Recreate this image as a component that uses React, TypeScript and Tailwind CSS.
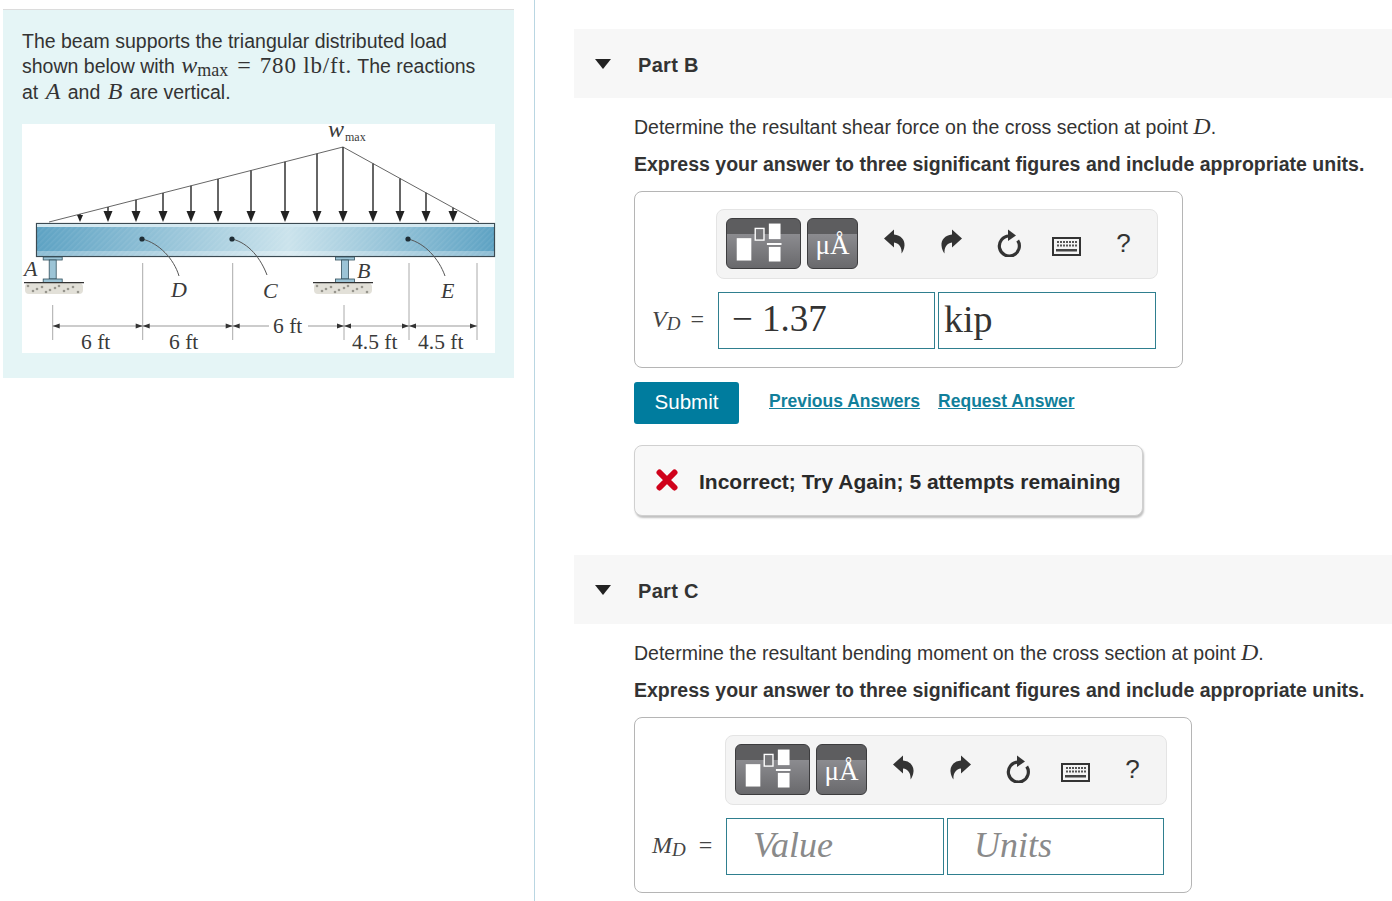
const serif = "font-['Liberation_Serif',serif]";

// x position of each load arrow, in diagram coordinates
const loadArrows = [58, 86, 114, 141, 169, 196, 229, 263, 295, 321, 351, 378, 404, 431];

function loadTop(x: number) {
  if (x <= 321) return 98 - ((x - 27) * 75) / 294;
  return 23 + ((x - 321) * 75) / 136;
}

function Gravel({ x }: { x: number }) {
  const dots = [4, 9, 13, 18, 22, 26, 31, 35, 40, 44, 49, 54];
  return (
    <g>
      <rect x={x + 1} y={159} width={58} height={11} rx={4} fill="#e2e0d8" />
      {dots.map((d, i) => (
        <circle key={d} cx={x + d} cy={162 + ((i * 5) % 7)} r={1.3} fill="#97958d" />
      ))}
      <line x1={x} x2={x + 60} y1={158.7} y2={158.7} stroke="#333" strokeWidth={1.2} />
    </g>
  );
}

function IBeam({ x }: { x: number }) {
  return (
    <g fill="#9cc4d6" stroke="#33505c" strokeWidth={0.8}>
      <rect x={x - 9.5} y={133} width={19} height={3} />
      <rect x={x - 3.5} y={136} width={7} height={19} />
      <rect x={x - 9.5} y={155} width={19} height={3.5} />
    </g>
  );
}

function DimArrow({ x, dir }: { x: number; dir: 1 | -1 }) {
  return <path d={`M${x} 202 l${dir * -7} -2.5 v5 Z`} fill="#333" />;
}

function BeamDiagram() {
  const labelClass = "font-['Liberation_Serif',serif] fill-[#3a3a3a]";
  return (
    <svg width={473} height={229} viewBox="0 0 473 229" className="block overflow-visible">
      <defs>
        <linearGradient id="beam" x1="0" x2="1" y1="0" y2="0">
          <stop offset="0" stopColor="#5da2c3" />
          <stop offset="0.55" stopColor="#cbe3ec" />
          <stop offset="1" stopColor="#5da2c3" />
        </linearGradient>
        <pattern id="hatch" width="4" height="4" patternUnits="userSpaceOnUse" patternTransform="rotate(45)">
          <rect width="1.5" height="4" fill="#ffffff" opacity="0.07" />
        </pattern>
      </defs>

      <rect width={473} height={229} fill="#fff" />

      <polyline points="27,98 321,23 457,98" fill="none" stroke="#666" strokeWidth={1} />
      {loadArrows.map((x) => {
        const top = loadTop(x);
        const headTop = Math.max(87, top + 1);
        const half = x === 58 ? 3 : 4.5;
        return (
          <g key={x}>
            <line x1={x} x2={x} y1={top} y2={92} stroke="#333" strokeWidth={1.5} />
            <path d={`M${x - half} ${headTop} H${x + half} L${x} 98 Z`} fill="#222" />
          </g>
        );
      })}

      <rect x={14.5} y={99.5} width={458} height={33} fill="url(#beam)" stroke="#3b4a52" strokeWidth={1.2} />
      <rect x={15} y={100} width={457} height={32} fill="url(#hatch)" />
      <rect x={15} y={100} width={457} height={3} fill="#d3e8f0" />
      <rect x={15} y={127} width={457} height={5} fill="#ffffff" opacity={0.3} />

      <IBeam x={30.7} />
      <IBeam x={323} />
      <Gravel x={2} />
      <Gravel x={291} />

      <g stroke="#aaa" strokeWidth={1}>
        <line x1={120.7} x2={120.7} y1={139} y2={216} />
        <line x1={210.7} x2={210.7} y1={139} y2={216} />
        <line x1={387} x2={387} y1={139} y2={216} />
        <line x1={455} x2={455} y1={139} y2={216} />
        <line x1={30.7} x2={30.7} y1={181} y2={216} />
        <line x1={322} x2={322} y1={181} y2={216} />
      </g>

      <g fill="none" stroke="#555" strokeWidth={1}>
        <path d="M120 115 C137 119 152 135 157 152" />
        <path d="M210 115 C227 119 239 135 245 151" />
        <path d="M386 115 C403 119 417 135 423 152" />
      </g>
      <circle cx={120} cy={115} r={2.6} fill="#1f2d35" />
      <circle cx={210} cy={115} r={2.6} fill="#1f2d35" />
      <circle cx={386} cy={115} r={2.6} fill="#1f2d35" />

      <g stroke="#999" strokeWidth={1}>
        <line x1={30.7} x2={210.7} y1={202} y2={202} />
        <line x1={210.7} x2={247} y1={202} y2={202} />
        <line x1={286} x2={455} y1={202} y2={202} />
      </g>
      <DimArrow x={30.7} dir={-1} />
      <DimArrow x={120.7} dir={1} />
      <DimArrow x={120.7} dir={-1} />
      <DimArrow x={210.7} dir={1} />
      <DimArrow x={210.7} dir={-1} />
      <DimArrow x={322} dir={1} />
      <DimArrow x={322} dir={-1} />
      <DimArrow x={387} dir={1} />
      <DimArrow x={387} dir={-1} />
      <DimArrow x={455} dir={1} />

      <g className={labelClass} fontStyle="italic" fontSize={22}>
        <text x={2} y={152}>A</text>
        <text x={335} y={154}>B</text>
        <text x={149} y={173}>D</text>
        <text x={241} y={174}>C</text>
        <text x={419} y={174}>E</text>
      </g>
      <text x={306} y={13} fontSize={24} fontStyle="italic" className={labelClass}>w</text>
      <text x={323} y={17} fontSize={12} className={labelClass}>max</text>
      <g className={labelClass} fontSize={21.5}>
        <text x={59} y={225}>6 ft</text>
        <text x={147} y={225}>6 ft</text>
        <text x={251} y={209}>6 ft</text>
        <text x={330} y={225}>4.5 ft</text>
        <text x={396} y={225}>4.5 ft</text>
      </g>
    </svg>
  );
}

function TemplateButton() {
  return (
    <button className="flex h-[51px] w-[75px] items-center justify-center rounded-md border border-[#3c3c3e] bg-[linear-gradient(#5d5d5f_0_30%,#8c8c90_30%,#69696c_100%)]">
      <svg width={75} height={51} viewBox="0 0 75 51">
        <rect x={10} y={20} width={15} height={23} fill="#fff" />
        <rect x={29} y={10} width={9} height={12} fill="#77777a" stroke="#fff" strokeWidth={1.4} />
        <rect x={43} y={5} width={12} height={16} fill="#fff" />
        <rect x={41} y={25} width={15} height={2} fill="#fff" />
        <rect x={43} y={29} width={12} height={15} fill="#fff" />
      </svg>
    </button>
  );
}

function SymbolButton() {
  return (
    <button className="relative flex h-[51px] w-[51px] items-end justify-center rounded-md border border-[#3c3c3e] bg-[linear-gradient(#5d5d5f_0_30%,#8c8c90_30%,#69696c_100%)] pb-[6px] font-['Liberation_Serif',serif] text-[27px] leading-[34px] text-white">
      μÅ
    </button>
  );
}

function UndoIcon({ flip }: { flip?: boolean }) {
  return (
    <svg width={21} height={25} viewBox="0 0 21 25" className={flip ? "-scale-x-100" : ""}>
      <path
        d="M0 9.5 L10 0.5 V5.5 C17 6 21 11 20.5 16.5 C20.2 20 19 22.5 17.5 24.5 C18 19 15.5 14 10 13.5 V18.5 Z"
        fill="#333"
      />
    </svg>
  );
}

function RefreshIcon() {
  return (
    <svg width={26} height={28} viewBox="0 0 26 28">
      <path d="M21.7 11.5 A10 10 0 1 1 13 7" fill="none" stroke="#333" strokeWidth={3.2} />
      <path d="M12 0.5 L20 6.5 L12 12 Z" fill="#333" />
    </svg>
  );
}

function KeyboardIcon() {
  const keys = [5, 8, 11, 14, 17, 20, 23];
  return (
    <svg width={29} height={19} viewBox="0 0 29 19">
      <rect x={1} y={1} width={27} height={17} fill="#f4f4f4" stroke="#333" strokeWidth={2} />
      {keys.map((x) => (
        <g key={x} fill="#555">
          <rect x={x} y={4} width={2} height={2} />
          <rect x={x} y={7.5} width={2} height={2} />
        </g>
      ))}
      <rect x={4} y={12} width={21} height={2.5} fill="#444" />
    </svg>
  );
}

function Toolbar() {
  return (
    <div className="flex h-[70px] w-[442px] items-center rounded-lg border border-[#e4e4e4] bg-[#f4f4f4] pb-[2px] pl-[9px]">
      <div className="flex gap-[6px]">
        <TemplateButton />
        <SymbolButton />
      </div>
      <div className="ml-[8px] flex text-[#333]">
        <div className="flex w-[57px] justify-center"><UndoIcon /></div>
        <div className="flex w-[57px] justify-center"><UndoIcon flip /></div>
        <div className="flex w-[58px] justify-center"><RefreshIcon /></div>
        <div className="flex w-[57px] items-center justify-center pt-[7px]"><KeyboardIcon /></div>
        <div className="flex w-[57px] items-center justify-center text-[26px] leading-none">?</div>
      </div>
    </div>
  );
}

type AnswerBoxProps = {
  width: string;
  rowClass: string;
  letter: string;
  value: string;
  units: string;
  placeholder?: boolean;
};

function AnswerBox({ width, rowClass, letter, value, units, placeholder }: AnswerBoxProps) {
  const field = `flex h-[57px] items-center border border-[#2f7f8f] pb-[4px] ${serif} leading-none`;
  const tone = placeholder ? "italic text-[#8a8a8a] text-[36px] pl-[26px]" : "text-[#333]";
  return (
    <div className={`flex flex-col rounded-lg border border-[#b5b5b5] bg-white pt-[17px] ${width} ${rowClass}`}>
      <div className="flex justify-end pr-[24px]">
        <Toolbar />
      </div>
      <div className={`mt-[13px] flex items-center ${placeholder ? "pr-[27px]" : "pr-[26px]"}`}>
        <div className={`flex-1 pb-[3px] pl-[17px] text-[24px] text-[#444] ${serif}`}>
          <i>{letter}</i>
          <i className="relative top-[3px] text-[19px]">D</i>
          <span className={placeholder ? "ml-[13px]" : "ml-[10px]"}>=</span>
        </div>
        <div className="flex gap-[3px]">
          <div className={`${field} ${tone} ${placeholder ? "w-[218px]" : "w-[217px] pl-[13px] text-[37px]"}`}>{value}</div>
          <div className={`${field} ${tone} ${placeholder ? "w-[217px]" : "w-[218px] pl-[5px] text-[38px]"}`}>{units}</div>
        </div>
      </div>
    </div>
  );
}

function PartHeader({ label }: { label: string }) {
  return (
    <div className="flex h-[69px] items-center bg-[#f7f7f7] pl-[21px]">
      <svg width={16} height={10} viewBox="0 0 16 10" className="mt-[1px]">
        <path d="M0 0 H16 L8 10 Z" fill="#222" />
      </svg>
      <span className="ml-[27px] mt-[2px] text-[20px] font-bold tracking-[0.3px] text-[#333]">{label}</span>
    </div>
  );
}

function Prompt({ children }: { children: React.ReactNode }) {
  return (
    <div className="pl-[60px] text-[#333]">
      <p className="h-[24px] text-[19.5px] leading-[22px]">{children}</p>
      <p className="mt-[15px] h-[24px] text-[19.5px] font-bold leading-[22px]">
        Express your answer to three significant figures and include appropriate units.
      </p>
    </div>
  );
}

export default function App() {
  const inlineMath = `${serif} leading-none`;
  return (
    <div className="flex h-[901px] w-[1392px] overflow-hidden bg-white font-['Liberation_Sans',sans-serif]">
      <div className="h-full w-[535px] shrink-0 border-r border-[#b9d6e2] pl-[3px] pt-[9px]">
        <div className="h-[369px] w-[511px] border-t border-[#dcdcdc] bg-[#e5f5f6] pl-[19px] pt-[19px]">
          <div className="h-[75px] text-[19.5px] leading-[25px] text-[#333]">
            <div className="h-[25px]">The beam supports the triangular distributed load</div>
            <div className="-mt-[1px] mb-[1px] h-[25px]">
              shown below with <i className={`${inlineMath} ml-[1px] text-[24px]`}>w</i>
              <span className={`${inlineMath} relative top-[3px] text-[18px]`}>max</span>
              <span className={`${inlineMath} ml-[9px] text-[24px]`}>=</span>
              <span className={`${inlineMath} ml-[9px] text-[23px] tracking-[0.8px]`}>780 lb/ft.</span> The reactions
            </div>
            <div className="h-[25px]">
              at <i className={`${inlineMath} mx-[2px] text-[24px]`}>A</i> and{" "}
              <i className={`${inlineMath} mx-[2px] text-[24px]`}>B</i> are vertical.
            </div>
          </div>
          <div className="mt-[20px]">
            <BeamDiagram />
          </div>
        </div>
      </div>

      <div className="min-w-0 flex-1 pl-[39px] pt-[29px]">
        <PartHeader label="Part B" />
        <div className="mt-[16px]">
          <Prompt>
            Determine the resultant shear force on the cross section at point{" "}
            <i className={`${inlineMath} text-[24px]`}>D</i>.
          </Prompt>
        </div>
        <div className="ml-[60px] mt-[14px]">
          <AnswerBox width="w-[549px]" rowClass="h-[177px]" letter="V" value="− 1.37" units="kip" />
          <div className="mt-[14px] flex items-center">
            <button className="h-[42px] w-[105px] rounded-[3px] bg-[#007c9e] pb-[2px] text-[20.5px] text-white">Submit</button>
            <a className="mb-[3px] ml-[30px] text-[17.5px] font-bold text-[#117f9b] underline">Previous Answers</a>
            <a className="mb-[3px] ml-[18px] text-[17.5px] font-bold text-[#117f9b] underline">Request Answer</a>
          </div>
          <div className="mt-[21px] flex h-[71px] w-[509px] items-center rounded-lg border border-[#d0d0d0] bg-[#f8f8f8] pl-[21px] shadow-[1px_2px_2px_rgba(0,0,0,0.25)]">
            <svg width={22} height={22} viewBox="0 0 22 22" className="mb-[2px]">
              <path d="M3.5 3.5 L18.5 18.5 M18.5 3.5 L3.5 18.5" stroke="#d0021b" strokeWidth={6} strokeLinecap="round" />
            </svg>
            <span className="ml-[21px] mt-[3px] text-[21px] font-bold text-[#2a2a2a]">
              Incorrect; Try Again; 5 attempts remaining
            </span>
          </div>
        </div>

        <div className="mt-[39px]">
          <PartHeader label="Part C" />
        </div>
        <div className="mt-[16px]">
          <Prompt>
            Determine the resultant bending moment on the cross section at point{" "}
            <i className={`${inlineMath} text-[24px]`}>D</i>.
          </Prompt>
        </div>
        <div className="ml-[60px] mt-[14px]">
          <AnswerBox width="w-[558px]" rowClass="h-[176px]" letter="M" value="Value" units="Units" placeholder />
        </div>
      </div>
    </div>
  );
}
